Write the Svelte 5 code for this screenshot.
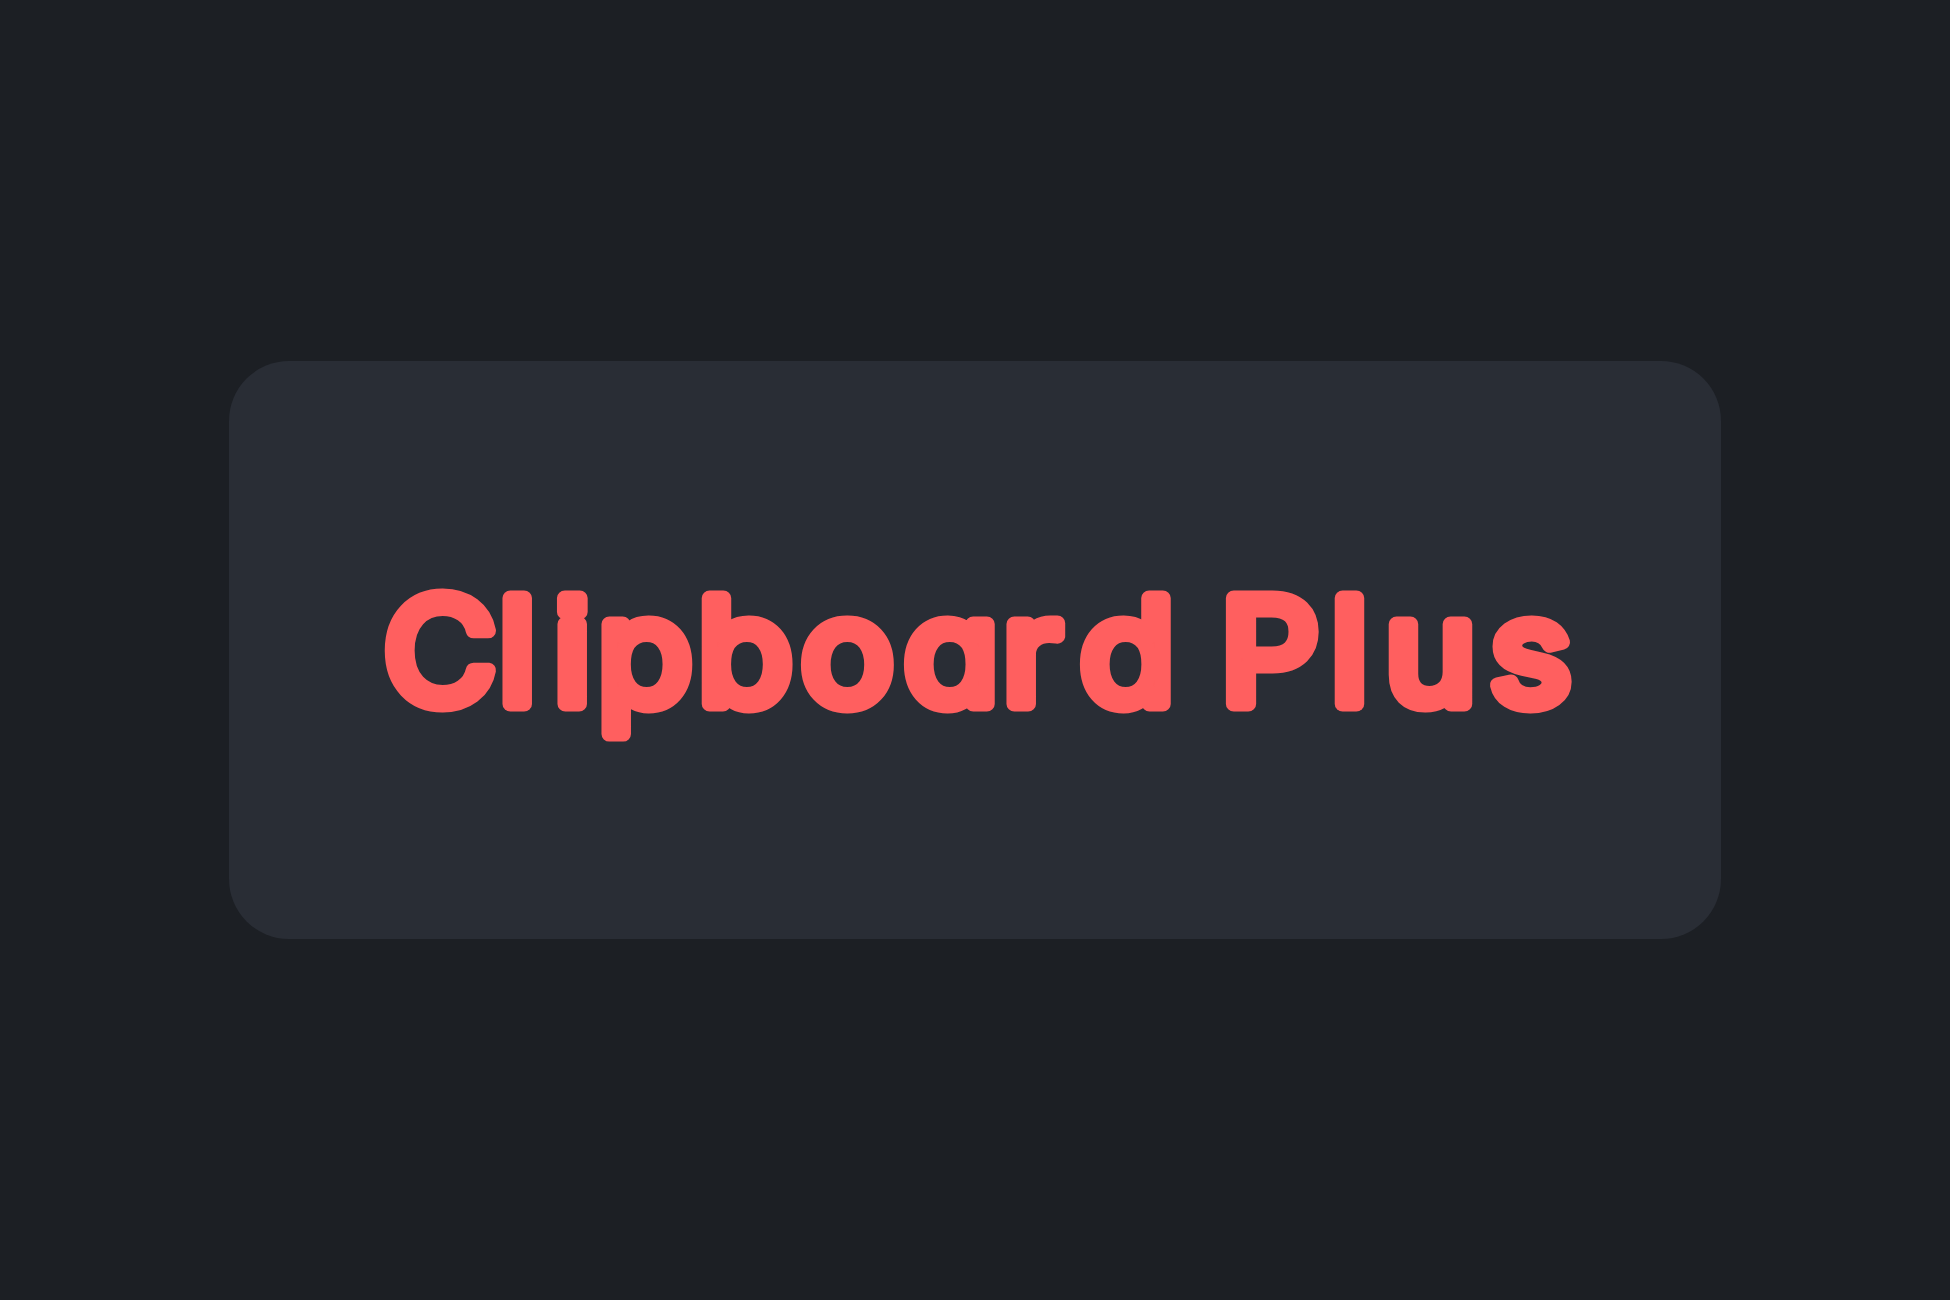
<script>
  // x origin of each glyph, the font has no natural match for these widths
  const title = 'Clipboard Plus';
  const xs = [8, 116.6, 168.4, 209.9, 304.4, 401.8, 499, 592, 665.1, 0, 797.5, 901.6, 952.5, 1051.7];
</script>

<main class="page">
  <section class="card">
    <svg class="logo" width="1200" height="200" viewBox="0 0 1200 200" role="img" aria-label={title}>
      <text x={xs.join(' ')} y="154">{title}</text>
    </svg>
  </section>
</main>

<style>
  :global(body) {
    background: #1c1f24;
  }

  .page {
    height: 1300px;
    display: flex;
    align-items: center;
    justify-content: center;
  }

  .card {
    width: 1492px;
    height: 578px;
    background: #292d35;
    border-radius: 60px;
    display: flex;
    align-items: center;
    justify-content: center;
  }

  .logo text {
    font-family: Inter, "Liberation Sans", sans-serif;
    font-size: 146px;
    font-weight: 400;
    font-feature-settings: "cv11" 1, "ss07" 1;
    transform: scaleX(1.06);
    fill: #ff5f5f;
    stroke: #ff5f5f;
    stroke-width: 15px;
    stroke-linejoin: round;
    stroke-linecap: round;
  }
</style>
